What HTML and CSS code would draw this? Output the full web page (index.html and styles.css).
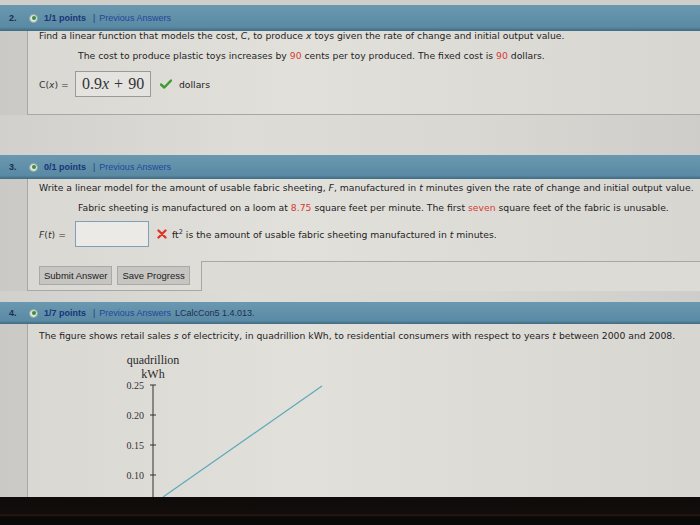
FILE: index.html
```html
<!DOCTYPE html>
<html>
<head>
<meta charset="utf-8">
<link rel="stylesheet" href="styles.css">
</head>
<body>
<div class="screen">
  <div class="topstrip"></div>

  <section class="q q2">
    <div class="qhead">
      <span class="qnum">2.</span>
      <span class="dot"></span>
      <span class="pts">1/1 points</span>
      <span class="sep">|</span>
      <span class="prev">Previous Answers</span>
    </div>
    <div class="qbody">
      <div class="gutter"></div>
      <div class="card">
        <p class="line">Find a linear function that models the cost, <i>C</i>, to produce <i>x</i> toys given the rate of change and initial output value.</p>
        <p class="line indent">The cost to produce plastic toys increases by <span class="red">90</span> cents per toy produced. The fixed cost is <span class="red">90</span> dollars.</p>
        <div class="answer">
          <span class="lbl">C(<i>x</i>) =</span>
          <span class="box filled"><span class="math">0.9<i>x</i> + 90</span></span>
          <span class="check">
            <svg width="12" height="10" viewBox="0 0 12 10"><path d="M1 5.5 L4.3 8.5 L11 1.5" fill="none" stroke="#3d9a2f" stroke-width="2.4" stroke-linecap="round" stroke-linejoin="round"/></svg>
          </span>
          <span class="unit">dollars</span>
        </div>
      </div>
    </div>
  </section>

  <section class="q q3">
    <div class="qhead">
      <span class="qnum">3.</span>
      <span class="dot"></span>
      <span class="pts">0/1 points</span>
      <span class="sep">|</span>
      <span class="prev">Previous Answers</span>
    </div>
    <div class="qbody">
      <div class="gutter"></div>
      <div class="card">
        <p class="line">Write a linear model for the amount of usable fabric sheeting, <i>F</i>, manufactured in <i>t</i> minutes given the rate of change and initial output value.</p>
        <p class="line indent">Fabric sheeting is manufactured on a loom at <span class="red">8.75</span> square feet per minute. The first <span class="red">seven</span> square feet of the fabric is unusable.</p>
        <div class="answer">
          <span class="lbl"><i>F</i>(<i>t</i>) =</span>
          <span class="box empty"></span>
          <span class="cross">
            <svg width="10" height="10" viewBox="0 0 10 10"><path d="M1.5 1.5 L8.5 8.5 M8.5 1.5 L1.5 8.5" stroke="#e0352b" stroke-width="2.4" stroke-linecap="round"/></svg>
          </span>
          <span class="unit">ft<sup>2</sup> is the amount of usable fabric sheeting manufactured in <i>t</i> minutes.</span>
        </div>
        <div class="actions">
          <button class="btn">Submit Answer</button>
          <button class="btn">Save Progress</button>
          <div class="status"></div>
        </div>
      </div>
    </div>
  </section>

  <section class="q q4">
    <div class="qhead">
      <span class="qnum">4.</span>
      <span class="dot"></span>
      <span class="pts">1/7 points</span>
      <span class="sep">|</span>
      <span class="prev">Previous Answers</span>
      <span class="src">LCalcCon5 1.4.013.</span>
    </div>
    <div class="qbody">
      <div class="gutter"></div>
      <div class="card">
        <p class="line">The figure shows retail sales <i>s</i> of electricity, in quadrillion kWh, to residential consumers with respect to years <i>t</i> between 2000 and 2008.</p>
        <div class="graph">
          <svg width="300" height="150" viewBox="0 0 300 150">
            <text x="115" y="17" class="gt" text-anchor="middle">quadrillion</text>
            <text x="115" y="31" class="gt" text-anchor="middle">kWh</text>
            <g class="gtick">
              <text x="106" y="42" text-anchor="end">0.25</text>
              <text x="106" y="72" text-anchor="end">0.20</text>
              <text x="106" y="102" text-anchor="end">0.15</text>
              <text x="106" y="132" text-anchor="end">0.10</text>
            </g>
            <line x1="115" y1="38" x2="115" y2="150" stroke="#333" stroke-width="1"/>
            <line x1="112" y1="38" x2="118" y2="38" stroke="#333" stroke-width="1"/>
            <line x1="112" y1="68" x2="118" y2="68" stroke="#333" stroke-width="1"/>
            <line x1="112" y1="98" x2="118" y2="98" stroke="#333" stroke-width="1"/>
            <line x1="112" y1="128" x2="118" y2="128" stroke="#333" stroke-width="1"/>
            <line x1="125" y1="150" x2="284" y2="39" stroke="#5aaab8" stroke-width="1.2"/>
          </svg>
        </div>
      </div>
    </div>
  </section>
  <div class="bezel"></div>
</div>
</body>
</html>
```
FILE: styles.css
```css
* { box-sizing: border-box; }
html, body { margin: 0; padding: 0; }
body {
  width: 700px;
  height: 525px;
  overflow: hidden;
  background: #d8d6d1;
  font-family: "DejaVu Sans", Verdana, sans-serif;
  color: #222;
}
.screen {
  position: relative;
  width: 700px;
  height: 525px;
  overflow: hidden;
  background: linear-gradient(90deg, #d2d0cc 0%, #dedcd7 35%, #d9d7d2 70%, #cfcdc9 100%);
}
.topstrip { height: 5px; background: #cfcecb; }

.qhead {
  display: flex;
  align-items: center;
  height: 26px;
  background: linear-gradient(180deg, #6a98b0 0%, #5a8aa4 85%, #3f6a82 100%);
  font-family: "Liberation Sans", Arial, sans-serif;
  font-size: 9px;
  color: #1d3a78;
}
.qnum { width: 27px; padding-left: 9px; font-weight: bold; color: #1c2f50; }
.dot {
  width: 9px; height: 9px; border-radius: 50%;
  background: #dfe6e2;
  border: 1px solid #8aa69a;
  position: relative;
  margin-left: 2px;
  margin-right: 6px;
}
.dot::after {
  content: ""; position: absolute; left: 1.5px; top: 1.5px;
  width: 4px; height: 4px; border-radius: 50%; background: #3f8a45;
}
.pts { font-weight: bold; color: #1a3478; }
.sep { margin: 0 4px 0 7px; color: #2b3f6a; }
.prev { color: #23469a; }
.src { margin-left: 4px; color: #1e2f55; }

.qbody { display: flex; }
.gutter { width: 27px; flex: none; background: rgba(0,0,0,0.03); }
.card {
  flex: 1;
  border-left: 1px solid #a9a7a2;
  border-bottom: 1px solid #a9a7a2;
  padding: 0 0 0 11px;
  background: linear-gradient(90deg, #dad8d3, #e2e0db 40%, #d8d6d1);
}
.line {
  margin: 0;
  font-size: 9.25px;
  line-height: 20px;
  white-space: nowrap;
  color: #1e1e1e;
}
.indent { padding-left: 39px; }
.red { color: #d63a32; }

.answer {
  display: flex;
  align-items: center;
  font-size: 9.25px;
  height: 26px;
}
.lbl { width: 36px; color: #333; }
.box {
  width: 76px; height: 26px;
  border: 1px solid #9a9a98;
  background: #e4e3e0;
  display: flex; align-items: center;
  padding-left: 6px;
  white-space: nowrap;
}
.box.empty { border-color: #7f9fb8; background: #eceae7; width: 74px; }
.math { font-family: "Liberation Serif", "Times New Roman", serif; font-size: 16px; color: #333; word-spacing: 1px; }
.math i { font-style: italic; }
.check { margin: 0 0 0 9px; width: 19px; display: flex; }
.cross { margin: 0 0 0 8px; width: 15px; display: flex; }
.unit { white-space: nowrap; }
.unit sup { font-size: 6.5px; vertical-align: 4px; }

.q2 .card { height: 84px; }
.q2 .line:first-child { margin-top: -5px; }
.q2 .answer { margin-top: 5px; }
.q2 { margin-bottom: 40px; }

.q3 .qhead { height: 24px; }
.q3 .card { height: 112px; }
.q3 .line:first-child { margin-top: -1px; }
.q3 .answer { margin-top: 3px; }
.q3 { margin-bottom: 11px; }

.q4 .qhead { height: 22px; }

.actions { display: flex; align-items: flex-start; margin-top: 14px; }
.btn {
  font-family: "Liberation Sans", Arial, sans-serif;
  font-size: 9.5px;
  color: #1c1c1c;
  background: #c6c5c2;
  border: 1px solid #aaa9a6;
  height: 19px;
  padding: 0 4px;
  margin: 5px 5px 0 0;
}
.status {
  flex: 1;
  height: 30px;
  margin-left: 6px;
  border-top: 1px solid #a9a7a2;
  border-left: 1px solid #a9a7a2;
  background: #dddbd6;
}

.q4 .card { border-bottom: none; height: 200px; }
.q4 .line:first-child { margin-top: 2px; }
.graph { margin-top: 1px; margin-left: -1px; }
.gt { font-family: "Liberation Serif", "Times New Roman", serif; font-size: 12px; fill: #2a2a2a; }
.gtick text { font-family: "Liberation Serif", "Times New Roman", serif; font-size: 10px; fill: #333; }

.bezel {
  position: absolute;
  left: 0; right: 0; bottom: 0;
  height: 28px;
  background: linear-gradient(180deg, #0e0b0a 0%, #120d0b 60%, #2a1a12 65%, #0b0908 70%, #0a0808 100%);
}
```
